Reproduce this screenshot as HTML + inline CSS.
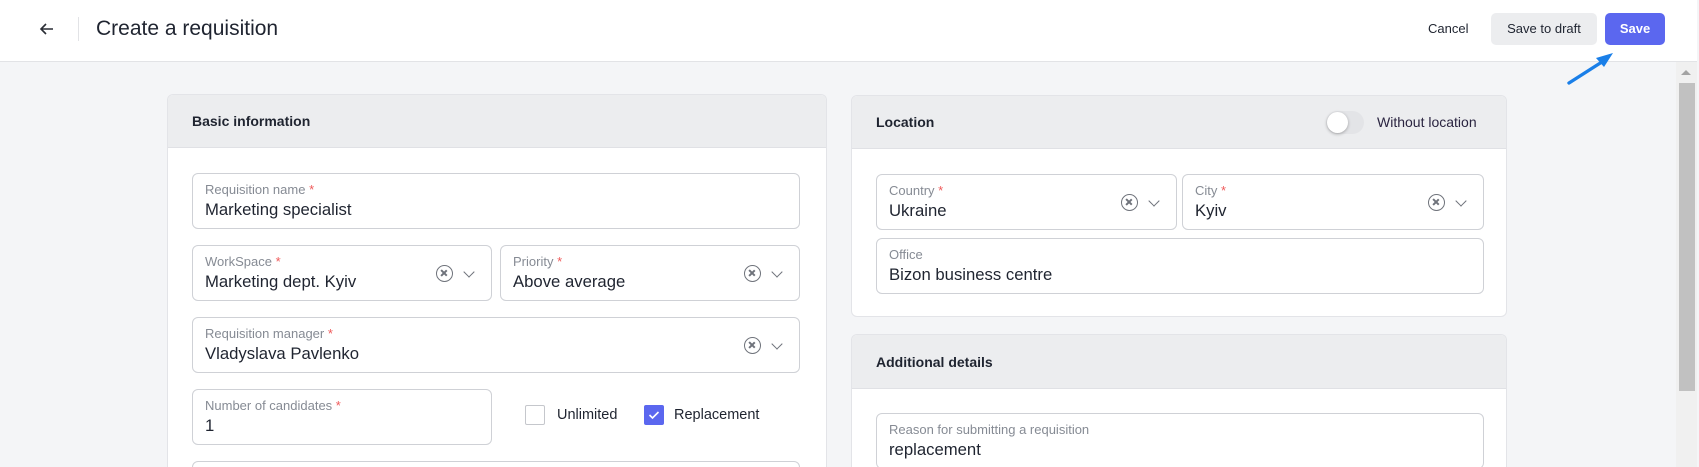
<!DOCTYPE html>
<html><head><meta charset="utf-8"><style>
*{box-sizing:border-box;margin:0;padding:0}
html,body{width:1699px;height:467px;overflow:hidden}
body{background:#f4f5f7;font-family:"Liberation Sans",sans-serif;color:#1f2430;position:relative}
.hdr{position:absolute;left:0;top:0;width:1697px;height:62px;background:#fff;border-bottom:1px solid #e2e3e6}
.abs{position:absolute}
.card{position:absolute;background:#fff;border:1px solid #e3e4e8;border-radius:6px 6px 0 0;border-bottom:none;overflow:hidden}
.ch{position:absolute;left:0;right:0;top:0;background:#ecedef;border-bottom:1px solid #e0e1e5}
.ct{position:absolute;left:24px;font-size:14px;font-weight:bold;color:#1f2430}
.f{position:absolute;border:1px solid #cfd1d6;border-radius:6px;background:#fff}
.f .l{position:absolute;left:12px;top:8px;font-size:13px;color:#868b94}
.f .l b{color:#ef5a5a;font-weight:normal}
.f .v{position:absolute;left:12px;top:26px;font-size:16.7px;color:#1f2430}
.x{position:absolute;width:17px;height:17px;border:1.6px solid #6f737b;border-radius:50%;top:19px}
.x:before,.x:after{content:"";position:absolute;left:6.3px;top:3px;width:1.6px;height:8px;background:#6f737b;transform:rotate(45deg)}
.x:after{transform:rotate(-45deg)}
.chev{position:absolute;top:22px;width:8px;height:8px;border-right:1.5px solid #6f737b;border-bottom:1.5px solid #6f737b;transform:rotate(45deg)}
</style></head><body>
<div class="hdr">
  <svg class="abs" style="left:38px;top:20px" width="18" height="18" viewBox="0 0 18 18"><path d="M15 9H3M8 4L3 9l5 5" fill="none" stroke="#2a2d35" stroke-width="1.6"/></svg>
  <div class="abs" style="left:78px;top:17px;width:1px;height:24px;background:#e2e3e6"></div>
  <div class="abs" style="left:96px;top:17px;font-size:21px;color:#1f2430">Create a requisition</div>
  <div class="abs" style="left:1428px;top:21px;font-size:13px">Cancel</div>
  <div class="abs" style="left:1491px;top:13px;width:106px;height:32px;background:#ecedef;border-radius:5px;font-size:13px;text-align:center;line-height:32px">Save to draft</div>
  <div class="abs" style="left:1605px;top:13px;width:60px;height:32px;background:#5b67ef;border-radius:5px;font-size:13px;color:#fff;font-weight:bold;text-align:center;line-height:32px">Save</div>
</div>
<svg class="abs" style="left:1560px;top:48px" width="60" height="40" viewBox="0 0 60 40"><path d="M9 35L45 12" stroke="#1a7fe8" stroke-width="3.4" stroke-linecap="round"/><path d="M53 5L36 10L44 19Z" fill="#1a7fe8"/></svg>
<div class="abs" style="left:1676px;top:62px;width:21px;height:405px;background:#f0f0f0"></div>
<div class="abs" style="left:1681px;top:70px;width:0;height:0;border-left:5px solid transparent;border-right:5px solid transparent;border-bottom:5px solid #a3a3a3"></div>
<div class="abs" style="left:1679px;top:83px;width:16px;height:308px;background:#c1c1c1"></div>

<div class="card" style="left:167px;top:94px;width:660px;height:373px">
  <div class="ch" style="height:53px"><div class="ct" style="top:18px">Basic information</div></div>
  <div class="f" style="left:24px;top:78px;width:608px;height:56px"><div class="l">Requisition name <b>*</b></div><div class="v">Marketing specialist</div></div>
  <div class="f" style="left:24px;top:150px;width:300px;height:56px"><div class="l">WorkSpace <b>*</b></div><div class="v">Marketing dept. Kyiv</div><div class="x" style="right:38px"></div><div class="chev" style="right:18px"></div></div>
  <div class="f" style="left:332px;top:150px;width:300px;height:56px"><div class="l">Priority <b>*</b></div><div class="v">Above average</div><div class="x" style="right:38px"></div><div class="chev" style="right:18px"></div></div>
  <div class="f" style="left:24px;top:222px;width:608px;height:56px"><div class="l">Requisition manager <b>*</b></div><div class="v">Vladyslava Pavlenko</div><div class="x" style="right:38px"></div><div class="chev" style="right:18px"></div></div>
  <div class="f" style="left:24px;top:294px;width:300px;height:56px"><div class="l">Number of candidates <b>*</b></div><div class="v">1</div></div>
  <div class="abs" style="left:357px;top:310px;width:20px;height:20px;border:1px solid #c5c7cc;border-radius:2px;background:#fff"></div>
  <div class="abs" style="left:389px;top:312px;font-size:14.5px">Unlimited</div>
  <div class="abs" style="left:476px;top:310px;width:20px;height:20px;background:#5b67ef;border-radius:2px"><svg width="20" height="20" viewBox="0 0 20 20"><path d="M5.5 10l3 3 6-6" fill="none" stroke="#fff" stroke-width="1.6"/></svg></div>
  <div class="abs" style="left:506px;top:312px;font-size:14.5px">Replacement</div>
  <div class="f" style="left:24px;top:366px;width:608px;height:56px"></div>
</div>

<div class="card" style="left:851px;top:95px;width:656px;height:222px;border-radius:6px;border-bottom:1px solid #e3e4e8">
  <div class="ch" style="height:53px"><div class="ct" style="top:18px">Location</div>
    <div class="abs" style="left:474px;top:15px;width:38px;height:23px;background:#e3e4e7;border-radius:12px"><div class="abs" style="left:1px;top:1px;width:21px;height:21px;border-radius:50%;background:#fff;box-shadow:0 1px 3px rgba(0,0,0,.3)"></div></div>
    <div class="abs" style="left:525px;top:18px;font-size:14px;color:#2a2440">Without location</div>
  </div>
  <div class="f" style="left:24px;top:78px;width:301px;height:56px"><div class="l">Country <b>*</b></div><div class="v">Ukraine</div><div class="x" style="right:38px"></div><div class="chev" style="right:18px"></div></div>
  <div class="f" style="left:330px;top:78px;width:302px;height:56px"><div class="l">City <b>*</b></div><div class="v">Kyiv</div><div class="x" style="right:38px"></div><div class="chev" style="right:18px"></div></div>
  <div class="f" style="left:24px;top:142px;width:608px;height:56px"><div class="l">Office</div><div class="v">Bizon business centre</div></div>
</div>

<div class="card" style="left:851px;top:334px;width:656px;height:133px">
  <div class="ch" style="height:54px"><div class="ct" style="top:19px">Additional details</div></div>
  <div class="f" style="left:24px;top:78px;width:608px;height:56px"><div class="l">Reason for submitting a requisition</div><div class="v">replacement</div></div>
</div>
</body></html>
